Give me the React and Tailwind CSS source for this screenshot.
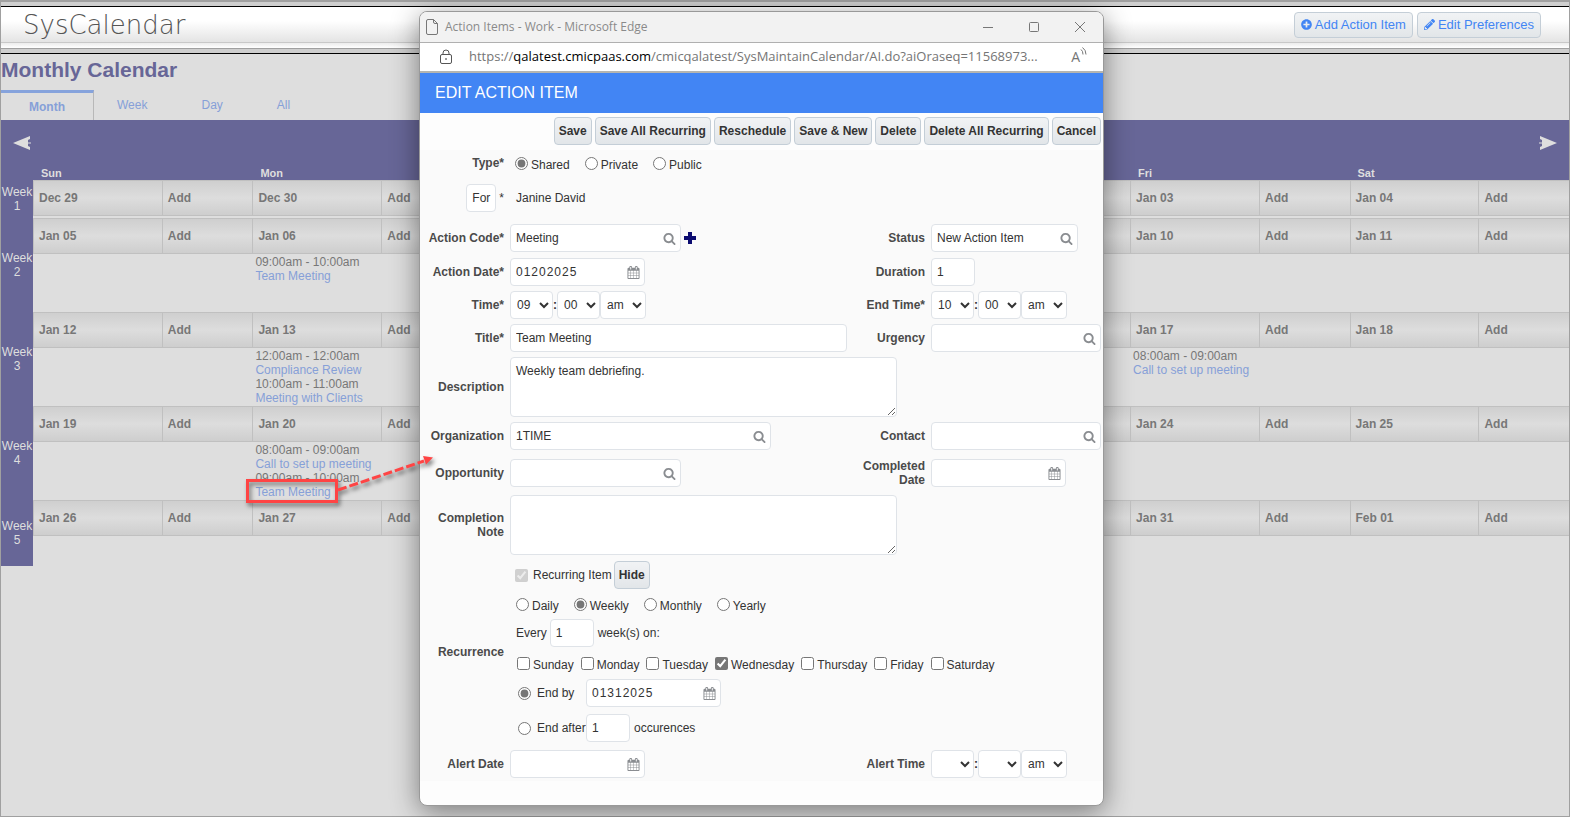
import React from 'react';
import { FaPlusCircle, FaPencilAlt } from 'react-icons/fa';

const weeks = [
  {
    name: 'Week 1',
    height: 'h-[38px]',
    days: [{ date: 'Dec 29' }, { date: 'Dec 30' }, {}, {}, {}, { date: 'Jan 03' }, { date: 'Jan 04' }],
  },
  {
    name: 'Week 2',
    height: 'h-[94px]',
    days: [
      { date: 'Jan 05' },
      { date: 'Jan 06', items: [{ time: '09:00am - 10:00am', title: 'Team Meeting' }] },
      {}, {}, {},
      { date: 'Jan 10' },
      { date: 'Jan 11' },
    ],
  },
  {
    name: 'Week 3',
    height: 'h-[94px]',
    days: [
      { date: 'Jan 12' },
      {
        date: 'Jan 13',
        items: [
          { time: '12:00am - 12:00am', title: 'Compliance Review' },
          { time: '10:00am - 11:00am', title: 'Meeting with Clients' },
        ],
      },
      {}, {}, {},
      { date: 'Jan 17', items: [{ time: '08:00am - 09:00am', title: 'Call to set up meeting' }] },
      { date: 'Jan 18' },
    ],
  },
  {
    name: 'Week 4',
    height: 'h-[94px]',
    days: [
      { date: 'Jan 19' },
      {
        date: 'Jan 20',
        items: [
          { time: '08:00am - 09:00am', title: 'Call to set up meeting' },
          { time: '09:00am - 10:00am', title: 'Team Meeting' },
        ],
      },
      {}, {}, {},
      { date: 'Jan 24' },
      { date: 'Jan 25' },
    ],
  },
  {
    name: 'Week 5',
    height: 'h-[66px]',
    days: [{ date: 'Jan 26' }, { date: 'Jan 27' }, {}, {}, {}, { date: 'Jan 31' }, { date: 'Feb 01' }],
  },
];

const weekdays = ['Sunday', 'Monday', 'Tuesday', 'Wednesday', 'Thursday', 'Friday', 'Saturday'];

const fieldClass = 'h-7 rounded border border-[#dfe3e8] bg-white text-xs text-[#333]';
const buttonClass =
  'h-7 rounded border border-[#c4ced7] bg-linear-to-b from-[#f1f3f5] to-[#e2e6e9] px-1 text-xs font-bold whitespace-nowrap text-[#333]';

const SearchIcon = () => (
  <svg viewBox="0 0 1792 1792" className="size-[13px] fill-[#8a8d91]">
    <path d="M1216 832q0-185-131.5-316.5t-316.5-131.5-316.5 131.5-131.5 316.5 131.5 316.5 316.5 131.5 316.5-131.5 131.5-316.5zm512 832q0 52-38 90t-90 38q-54 0-90-38l-343-342q-179 124-399 124-143 0-273.5-55.5t-225-150-150-225-55.5-273.5 55.5-273.5 150-225 225-150 273.5-55.5 273.5 55.5 225 150 150 225 55.5 273.5q0 220-124 399l343 343q37 37 37 90z" />
  </svg>
);

const CalendarIcon = () => (
  <svg viewBox="0 0 1792 1792" className="size-[13px] fill-[#8a8d91]">
    <path d="M192 1664h288v-288h-288v288zm352 0h320v-288h-320v288zm-352-352h288v-320h-288v320zm352 0h320v-320h-320v320zm-352-384h288v-288h-288v288zm736 736h320v-288h-320v288zm-384-736h320v-288h-320v288zm768 736h288v-288h-288v288zm-384-352h320v-320h-320v320zm-352-864v-288q0-13-9.5-22.5t-22.5-9.5h-64q-13 0-22.5 9.5t-9.5 22.5v288q0 13 9.5 22.5t22.5 9.5h64q13 0 22.5-9.5t9.5-22.5zm736 864h288v-320h-288v320zm-384-384h320v-288h-320v288zm384 0h288v-288h-288v288zm32-480v-288q0-13-9.5-22.5t-22.5-9.5h-64q-13 0-22.5 9.5t-9.5 22.5v288q0 13 9.5 22.5t22.5 9.5h64q13 0 22.5-9.5t9.5-22.5zm384-64v1280q0 52-38 90t-90 38h-1408q-52 0-90-38t-38-90v-1280q0-52 38-90t90-38h128v-96q0-66 47-113t113-47h64q66 0 113 47t47 113v96h384v-96q0-66 47-113t113-47h64q66 0 113 47t47 113v96h128q52 0 90 38t38 90z" />
  </svg>
);

const ArrowIcon = ({ className }) => (
  <svg viewBox="0 0 18 14" className={`h-3.5 w-[18px] fill-[#dedede] ${className}`}>
    <path d="M0 7 17 0v3l-2 1v2.500h3v1H15V10l2 1v3z" />
  </svg>
);

const Label = ({ id, children }) => (
  <label htmlFor={id} className="text-right font-bold text-[#4a4a4a]">{children}</label>
);

const LookupField = ({ id, value = '', width }) => (
  <div className={`flex items-center ${fieldClass} ${width}`}>
    <input id={id} defaultValue={value} className="min-w-0 flex-1 pl-[5px] outline-none" />
    <button type="button" aria-label="Search" className="px-1"><SearchIcon /></button>
  </div>
);

const DateField = ({ id, value = '', label }) => (
  <div className={`flex w-[135px] items-center ${fieldClass}`}>
    <input
      id={id}
      aria-label={label}
      defaultValue={value}
      className="min-w-0 flex-1 pl-[5px] tracking-[1px] outline-none"
    />
    <button type="button" aria-label="Pick a date" className="px-1"><CalendarIcon /></button>
  </div>
);

const TimeField = ({ id, hour = '', minute = '' }) => (
  <div className="flex items-center">
    <select id={id} className={`w-[43px] pl-0.5 ${fieldClass}`}>
      <option>{hour}</option>
    </select>
    <span className="w-1 text-center font-bold">:</span>
    <select aria-label="Minutes" className={`w-[43px] pl-0.5 ${fieldClass}`}>
      <option>{minute}</option>
    </select>
    <select aria-label="am or pm" className={`w-[46px] pl-0.5 ${fieldClass}`}>
      <option>am</option>
    </select>
  </div>
);

const Choice = ({ type = 'radio', name, label, checked }) => (
  <label className="flex items-center gap-[3px]">
    <input type={type} name={name} defaultChecked={checked} className="size-[13px] accent-[#767676]" />
    <span className="pt-1">{label}</span>
  </label>
);

const DayHead = ({ date }) => (
  <div className="flex h-9 border-y border-l border-[#c0c0c0] bg-linear-to-b from-[#cfcfcf] via-[#dddddd] to-[#cecece] leading-[34px] font-bold text-[#777]">
    <div className="w-[59%] border-r border-[#c0c0c0] pl-[5px]">{date}</div>
    {date && <a href="#add" className="pl-[5px]">Add</a>}
  </div>
);

const Calendar = () => (
  <main className="text-xs">
    <h1 className="pt-1 pb-2 text-[21px] leading-6 font-bold text-[#676697]">Monthly Calendar</h1>
    <nav className="flex h-[30px] items-center text-[#86a0d8]">
      <a href="#month" className="flex h-[30px] w-[93px] items-center justify-center border-t-3 border-r border-t-[#86a3dc] border-r-[#b8b8b8] font-bold">
        Month
      </a>
      <a href="#week" className="mr-2 px-[23px]">Week</a>
      <a href="#day" className="mr-2 px-[23px]">Day</a>
      <a href="#all" className="px-[23px]">All</a>
    </nav>
    <div className="flex h-[46px] items-center justify-between bg-[#676697] px-3">
      <button type="button" aria-label="Previous month"><ArrowIcon /></button>
      <button type="button" aria-label="Next month"><ArrowIcon className="rotate-180" /></button>
    </div>
    <table className="w-full table-fixed border-collapse">
      <thead className="bg-[#676697] text-[11px] leading-[14px] text-[#dedede]">
        <tr>
          <th className="w-8" />
          {['Sun', 'Mon', '', '', '', 'Fri', 'Sat'].map((day, i) => (
            <th key={i} className="pl-2 text-left">{day}</th>
          ))}
        </tr>
      </thead>
      <tbody>
        {weeks.map((week) => (
          <tr key={week.name} className={week.height}>
            <th className="bg-[#676697] p-0 text-center leading-[14px] font-normal text-[#dedede]">{week.name}</th>
            {week.days.map((day, i) => (
              <td key={i} className="p-0 align-top">
                <DayHead date={day.date} />
                {day.items && (
                  <ul className="pt-px pl-[3px] leading-[14px] text-[#777]">
                    {day.items.map((item) => (
                      <li key={item.time}>
                        {item.time}
                        <br />
                        <a href="#item" className="text-[#86a0d8]">{item.title}</a>
                      </li>
                    ))}
                  </ul>
                )}
              </td>
            ))}
          </tr>
        ))}
      </tbody>
    </table>
  </main>
);

const Header = () => (
  <div className="border-y border-black">
    <header className="flex h-9 items-center justify-between border-b border-[#c8c8c8] bg-linear-to-b from-white from-40% to-[#e4e4e4] pr-7 pl-[22px]">
      <div className="font-['DejaVu_Sans'] text-[26px] leading-8 font-extralight text-[#555]">SysCalendar</div>
      <div className="flex gap-1">
        <a href="#new" className="flex h-[26px] items-center gap-[3px] rounded border border-[#c4ced7] bg-linear-to-b from-[#f1f3f5] to-[#e2e6e9] px-1.5 text-[13px] text-[#4285f4]">
          <FaPlusCircle className="size-[11px]" />
          Add Action Item
        </a>
        <a href="#prefs" className="flex h-[26px] items-center gap-[3px] rounded border border-[#c4ced7] bg-linear-to-b from-[#f1f3f5] to-[#e2e6e9] px-1.5 text-[13px] text-[#4285f4]">
          <FaPencilAlt className="size-[11px]" />
          Edit Preferences
        </a>
      </div>
    </header>
    <div className="h-1.5 border-b border-[#a0a0a0] bg-linear-to-b from-[#ececec] to-white" />
    <div className="h-1 bg-[#cecece]" />
  </div>
);

const TitleBar = () => (
  <div className="flex h-[31px] items-center border-b border-[#b0b0b0] bg-[#f2f2f2] pr-[18px] pl-1.5 font-['Open_Sans'] text-xs text-[#8a8a8a]">
    <svg viewBox="0 0 12 16" className="mr-[7px] h-4 w-3 shrink-0 fill-none stroke-[#777]">
      <path d="M7.500.5H2A1.500 1.500 0 0 0 .5 2v12A1.500 1.500 0 0 0 2 15.500h8a1.500 1.500 0 0 0 1.500-1.500V4.500zM7.500.5V3A1.500 1.500 0 0 0 9 4.500h2.500" />
    </svg>
    <span className="flex-1">Action Items - Work - Microsoft Edge</span>
    <div className="flex gap-9">
      <button type="button" aria-label="Minimize">
        <svg viewBox="0 0 10 10" className="size-2.5 stroke-[#777]"><path d="M0 5.500h10" /></svg>
      </button>
      <button type="button" aria-label="Maximize">
        <svg viewBox="0 0 10 10" className="size-2.5 fill-none stroke-[#777]">
          <rect x=".5" y=".5" width="9" height="9" rx="1" />
        </svg>
      </button>
      <button type="button" aria-label="Close">
        <svg viewBox="0 0 10 10" className="size-2.5 stroke-[#777]"><path d="m0 0 10 10M10 0 0 10" /></svg>
      </button>
    </div>
  </div>
);

const AddressBar = () => (
  <div className="flex h-[30px] items-center border-b-2 border-[#b5b5b0] bg-white pr-4 pl-5 font-['Open_Sans'] text-[13px] text-[#757575]">
    <svg viewBox="0 0 12 16" className="mr-[17px] h-4 w-3 shrink-0 fill-none stroke-[#555]">
      <rect x=".5" y="5.500" width="11" height="9" rx="1.500" />
      <path d="M3 5.500V4a3 3 0 0 1 6 0v1.500" />
      <circle cx="6" cy="10" r=".5" />
    </svg>
    <span className="flex-1 whitespace-nowrap">
      https://<span className="text-black">qalatest.cmicpaas.com</span>/cmicqalatest/SysMaintainCalendar/AI.do?aiOraseq=11568973...
    </span>
    <span className="flex text-sm">
      A
      <svg viewBox="0 0 7 9" className="h-[9px] w-[7px] fill-none stroke-[#757575]">
        <path d="M1 2.500Q3 4 3 7.500M2.500.5Q6 3 6 7.500" />
      </svg>
    </span>
  </div>
);

const Recurrence = () => (
  <div className="col-span-3 pl-[5px]">
    <div className="flex items-center">
      <label className="flex items-center gap-[5px]">
        <input type="checkbox" defaultChecked disabled className="size-[13px]" />
        Recurring Item
      </label>
      <button type="button" className={`ml-0.5 ${buttonClass}`}>Hide</button>
    </div>
    <div className="flex h-[30px] items-center gap-[15px] pl-px">
      <Choice name="frequency" label="Daily" />
      <Choice name="frequency" label="Weekly" checked />
      <Choice name="frequency" label="Monthly" />
      <Choice name="frequency" label="Yearly" />
    </div>
    <div className="flex items-center pl-px">
      <label htmlFor="every">Every</label>
      <input id="every" defaultValue="1" className={`mr-1 ml-[3px] w-11 pl-[5px] ${fieldClass}`} />
      week(s) on:
    </div>
    <div className="flex h-8 items-center gap-[7px] pl-0.5">
      {weekdays.map((day) => (
        <Choice key={day} type="checkbox" label={day} checked={day === 'Wednesday'} />
      ))}
    </div>
    <div className="flex items-center pl-[3px]">
      <label className="flex w-[68px] items-center gap-1.5">
        <input type="radio" name="end" defaultChecked className="size-[13px] accent-[#767676]" />
        End by
      </label>
      <DateField value="01312025" label="End by date" />
    </div>
    <div className="mt-[7px] flex items-center pl-[3px]">
      <label className="flex w-[68px] items-center gap-1.5 whitespace-nowrap">
        <input type="radio" name="end" className="size-[13px] accent-[#767676]" />
        End after
      </label>
      <input aria-label="Number of occurences" defaultValue="1" className={`mr-1 w-11 pl-[5px] ${fieldClass}`} />
      occurences
    </div>
  </div>
);

const rowClass = 'grid grid-cols-[84px_1fr_64px_170px] items-center gap-x-1.5';

const ActionItemForm = () => (
  <form className="bg-[#fafafa] pr-0.5 pb-[3px] text-xs leading-[14px] text-[#333]">
    <div className={`h-[26px] ${rowClass}`}>
      <Label>Type*</Label>
      <div className="col-span-3 flex gap-[15px] pl-[5px]">
        <Choice name="type" label="Shared" checked />
        <Choice name="type" label="Private" />
        <Choice name="type" label="Public" />
      </div>
    </div>
    <div className={`mt-2 ${rowClass}`}>
      <div className="flex items-center justify-end gap-[3px]">
        <button type="button" className={`px-[5px] ${fieldClass}`}>For</button>
        *
      </div>
      <span className="pl-1.5">Janine David</span>
    </div>
    <div className={`mt-3 ${rowClass}`}>
      <Label id="code">Action Code*</Label>
      <div className="flex items-center gap-[3px]">
        <LookupField id="code" value="Meeting" width="w-[171px]" />
        <button type="button" aria-label="Add action code">
          <svg viewBox="0 0 12 12" className="size-3 fill-[#0b0b70]"><path d="M4 0h4v4h4v4H8v4H4V8H0V4h4z" /></svg>
        </button>
      </div>
      <Label id="status">Status</Label>
      <LookupField id="status" value="New Action Item" width="w-[147px]" />
    </div>
    <div className={`mt-1.5 ${rowClass}`}>
      <Label id="date">Action Date*</Label>
      <DateField id="date" value="01202025" />
      <Label id="duration">Duration</Label>
      <input id="duration" defaultValue="1" className={`w-11 pl-[5px] ${fieldClass}`} />
    </div>
    <div className={`mt-[5px] ${rowClass}`}>
      <Label id="time">Time*</Label>
      <TimeField id="time" hour="09" minute="00" />
      <Label id="end-time">End Time*</Label>
      <TimeField id="end-time" hour="10" minute="00" />
    </div>
    <div className={`mt-[5px] ${rowClass}`}>
      <Label id="title">Title*</Label>
      <input id="title" defaultValue="Team Meeting" className={`w-[337px] pl-[5px] ${fieldClass}`} />
      <Label id="urgency">Urgency</Label>
      <LookupField id="urgency" width="w-full" />
    </div>
    <div className={`mt-[5px] ${rowClass}`}>
      <Label id="description">Description</Label>
      <textarea
        id="description"
        defaultValue="Weekly team debriefing."
        className="col-span-3 block h-[60px] w-[387px] rounded border border-[#dfe3e8] bg-white px-[5px] py-1.5"
      />
    </div>
    <div className={`mt-[5px] ${rowClass}`}>
      <Label id="organization">Organization</Label>
      <LookupField id="organization" value="1TIME" width="w-[261px]" />
      <Label id="contact">Contact</Label>
      <LookupField id="contact" width="w-full" />
    </div>
    <div className={`mt-[9px] ${rowClass}`}>
      <Label id="opportunity">Opportunity</Label>
      <LookupField id="opportunity" width="w-[171px]" />
      <Label id="completed">Completed Date</Label>
      <DateField id="completed" />
    </div>
    <div className={`mt-2 ${rowClass}`}>
      <Label id="note">Completion Note</Label>
      <textarea
        id="note"
        className="col-span-3 block h-[60px] w-[387px] rounded border border-[#dfe3e8] bg-white px-[5px] py-1.5"
      />
    </div>
    <div className={`mt-1.5 ${rowClass}`}>
      <Label>Recurrence</Label>
      <Recurrence />
    </div>
    <div className={`mt-2 ${rowClass}`}>
      <Label id="alert-date">Alert Date</Label>
      <DateField id="alert-date" />
      <Label id="alert-time">Alert Time</Label>
      <TimeField id="alert-time" />
    </div>
  </form>
);

const ActionItemWindow = () => (
  <section
    role="dialog"
    className="absolute top-[9px] left-[418px] w-[685px] overflow-hidden rounded-lg border border-[#999] bg-[#fdfdfd] pb-6 shadow-[0_6px_28px_rgba(0,0,0,0.45)]"
  >
    <TitleBar />
    <AddressBar />
    <h2 className="bg-[#4285f4] pl-[15px] text-base leading-10 text-white">EDIT ACTION ITEM</h2>
    <div className="flex justify-end gap-[3px] pt-1 pr-0.5 pb-[5px]">
      {['Save', 'Save All Recurring', 'Reschedule', 'Save & New', 'Delete', 'Delete All Recurring', 'Cancel'].map((name) => (
        <button key={name} type="button" className={buttonClass}>{name}</button>
      ))}
    </div>
    <ActionItemForm />
  </section>
);

// Red box round the calendar entry, with a dashed arrow to the open window
const Callout = () => (
  <svg
    viewBox="0 0 200 64"
    className="pointer-events-none absolute top-[448px] left-[239px] h-16 w-[200px] fill-none stroke-[#f44] drop-shadow-[2px_3px_2px_rgba(0,0,0,0.5)]"
  >
    <rect x="7.500" y="30.500" width="89" height="21" strokeWidth="3" />
    <path d="M98 40 184 11" strokeWidth="3" strokeDasharray="9 3" />
    <path d="m183 6 10 1.500-7 7z" className="fill-[#f44] stroke-none" />
  </svg>
);

const App = () => (
  <div className="relative min-h-screen border border-t-2 border-[#a0a0a0] bg-[#dedede] font-['Liberation_Sans',Arial,sans-serif]">
    <div className="h-1 bg-[#cecece]" />
    <Header />
    <Calendar />
    <ActionItemWindow />
    <Callout />
  </div>
);

export default App;
